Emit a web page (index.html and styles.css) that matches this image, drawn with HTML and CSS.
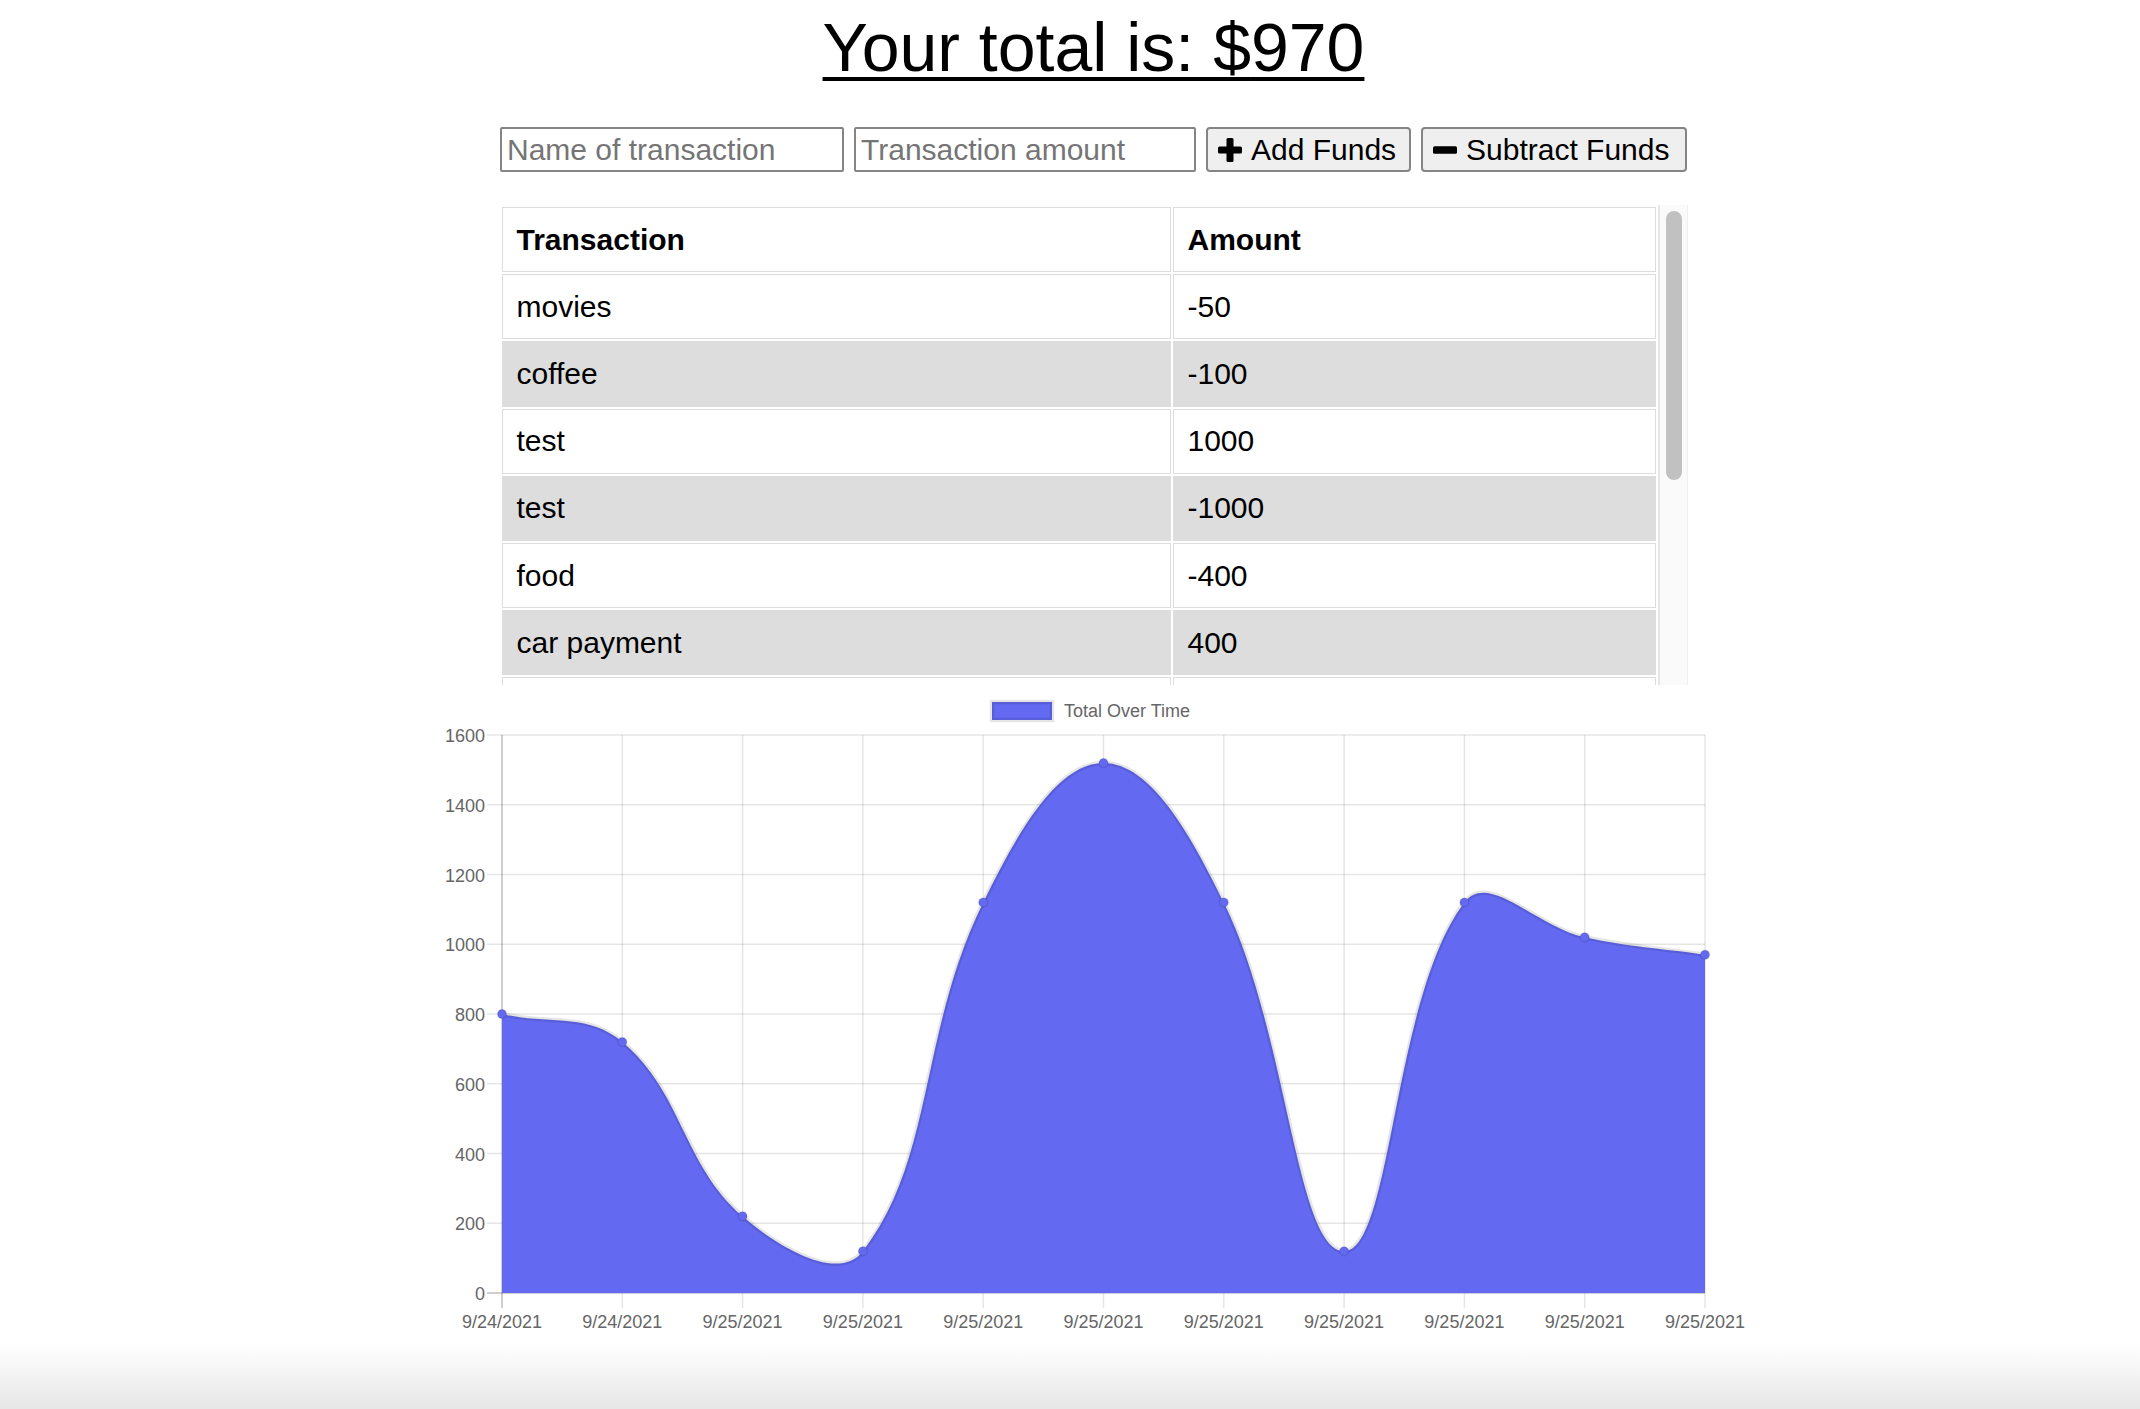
FILE: index.html
```html
<!DOCTYPE html>
<html lang="en">
<head>
<meta charset="utf-8">
<title>Budget Tracker</title>
<link rel="stylesheet" href="styles.css">
</head>
<body>
<h1 class="total">Your total is: $<span id="total">970</span></h1>

<form class="entry">
  <input class="field field-name" type="text" placeholder="Name of transaction">
  <input class="field field-amount" type="text" placeholder="Transaction amount">
  <button type="button" class="btn btn-add">
    <svg class="icon" viewBox="0 0 24 24" aria-hidden="true"><rect x="8.5" y="0" width="7" height="24" rx="1.5"/><rect x="0" y="8.5" width="24" height="7" rx="1.5"/></svg>
    <span>Add Funds</span>
  </button>
  <button type="button" class="btn btn-sub">
    <svg class="icon" viewBox="0 0 24 24" aria-hidden="true"><rect x="0" y="8.3" width="24" height="7.5" rx="1.5"/></svg>
    <span>Subtract Funds</span>
  </button>
</form>

<div class="table-box">
  <div class="table-view">
    <table class="tx">
      <thead>
        <tr><th class="col-name">Transaction</th><th>Amount</th></tr>
      </thead>
      <tbody>
        <tr><td>movies</td><td>-50</td></tr>
        <tr><td>coffee</td><td>-100</td></tr>
        <tr><td>test</td><td>1000</td></tr>
        <tr><td>test</td><td>-1000</td></tr>
        <tr><td>food</td><td>-400</td></tr>
        <tr><td>car payment</td><td>400</td></tr>
        <tr class="row-more"><td></td><td></td></tr>
      </tbody>
    </table>
  </div>
  <div class="scrollbar" aria-hidden="true"><div class="thumb"></div></div>
</div>

<svg class="chart" width="1321" height="650" viewBox="433 690 1321 650">
  <g class="legend">
    <rect class="legend-box" x="992" y="702" width="60" height="18"/>
    <text class="axis-label" x="1064" y="717">Total Over Time</text>
  </g>
  <g class="grid">
    <line x1="487" y1="735" x2="1705" y2="735"/>
    <line x1="487" y1="804.75" x2="1705" y2="804.75"/>
    <line x1="487" y1="874.5" x2="1705" y2="874.5"/>
    <line x1="487" y1="944.25" x2="1705" y2="944.25"/>
    <line x1="487" y1="1014" x2="1705" y2="1014"/>
    <line x1="487" y1="1083.75" x2="1705" y2="1083.75"/>
    <line x1="487" y1="1153.5" x2="1705" y2="1153.5"/>
    <line x1="487" y1="1223.25" x2="1705" y2="1223.25"/>
    <line x1="622.3" y1="735" x2="622.3" y2="1308"/>
    <line x1="742.6" y1="735" x2="742.6" y2="1308"/>
    <line x1="862.9" y1="735" x2="862.9" y2="1308"/>
    <line x1="983.2" y1="735" x2="983.2" y2="1308"/>
    <line x1="1103.5" y1="735" x2="1103.5" y2="1308"/>
    <line x1="1223.8" y1="735" x2="1223.8" y2="1308"/>
    <line x1="1344.1" y1="735" x2="1344.1" y2="1308"/>
    <line x1="1464.4" y1="735" x2="1464.4" y2="1308"/>
    <line x1="1584.7" y1="735" x2="1584.7" y2="1308"/>
    <line x1="1705" y1="735" x2="1705" y2="1308"/>
  </g>
  <g class="zero">
    <line x1="487" y1="1293" x2="1705" y2="1293"/>
    <line x1="502" y1="735" x2="502" y2="1308"/>
  </g>
  <g class="axis-label y-labels">
    <text x="485" y="742">1600</text>
    <text x="485" y="811.75">1400</text>
    <text x="485" y="881.5">1200</text>
    <text x="485" y="951.25">1000</text>
    <text x="485" y="1021">800</text>
    <text x="485" y="1090.75">600</text>
    <text x="485" y="1160.5">400</text>
    <text x="485" y="1230.25">200</text>
    <text x="485" y="1300">0</text>
  </g>
  <g class="axis-label x-labels">
    <text x="502" y="1328">9/24/2021</text>
    <text x="622.3" y="1328">9/24/2021</text>
    <text x="742.6" y="1328">9/25/2021</text>
    <text x="862.9" y="1328">9/25/2021</text>
    <text x="983.2" y="1328">9/25/2021</text>
    <text x="1103.5" y="1328">9/25/2021</text>
    <text x="1223.8" y="1328">9/25/2021</text>
    <text x="1344.1" y="1328">9/25/2021</text>
    <text x="1464.4" y="1328">9/25/2021</text>
    <text x="1584.7" y="1328">9/25/2021</text>
    <text x="1705" y="1328">9/25/2021</text>
  </g>
  <path id="area" class="area" d=""/>
  <path id="line" class="line" d=""/>
  <g id="points" class="points"></g>
</svg>

<script src="chart.js"></script>
</body>
</html>
```

FILE: styles.css
```css
html {
  background-color: #fff;
  background-image: linear-gradient(to bottom, #fff 0, #fff 1342px, #f6f6f6 1368px, #e6e6e6 1409px);
  background-repeat: no-repeat;
  background-size: 100% 1409px;
}

body {
  margin: 0;
  padding-left: 47px;
  font-family: "Liberation Sans", Arial, Helvetica, sans-serif;
  color: #000;
}

.total {
  margin: 0;
  padding-top: 8px;
  text-align: center;
  font-size: 68px;
  line-height: 78px;
  font-weight: normal;
  text-decoration: underline;
  text-decoration-thickness: 3.5px;
  text-underline-offset: 6px;
}

.entry {
  display: flex;
  justify-content: center;
  gap: 10px;
  margin: 41px 0 0;
}

.field {
  box-sizing: border-box;
  height: 45px;
  margin: 0;
  padding: 0 5px;
  border: 2px solid #858585;
  border-radius: 2px;
  font-family: "Liberation Sans", Arial, sans-serif;
  font-size: 30px;
  color: #000;
  background: #fff;
}

.field::placeholder {
  color: #757575;
}

.field-name {
  width: 344px;
}

.field-amount {
  width: 342px;
}

.btn {
  box-sizing: border-box;
  display: inline-flex;
  align-items: center;
  gap: 9px;
  height: 45px;
  margin: 0;
  padding: 0 0 0 10px;
  border: 2px solid #858585;
  border-radius: 4px;
  background: #efefef;
  color: #000;
  font-family: "Liberation Sans", Arial, sans-serif;
  font-size: 30px;
  white-space: nowrap;
}

.btn-add {
  width: 205px;
}

.btn-sub {
  width: 266px;
}

.icon {
  width: 24px;
  height: 24px;
  flex: none;
  fill: #000;
}

.table-box {
  display: flex;
  width: 1188px;
  height: 480px;
  margin: 33px auto 0;
}

.table-view {
  flex: 1;
  min-width: 0;
  overflow: hidden;
}

.scrollbar {
  box-sizing: border-box;
  flex: none;
  width: 30px;
  padding: 6px 5px 0 6px;
  background: #fafafa;
  border-left: 2px solid #e6e6e6;
  border-right: 1px solid #efefef;
}

.thumb {
  width: 16px;
  height: 269px;
  border-radius: 8px;
  background: #c1c1c1;
}

.tx {
  width: 100%;
  border-spacing: 2px;
  font-size: 30px;
}

.tx th,
.tx td {
  padding: 14.6px 14px;
  border: 1px solid #ddd;
  line-height: 34px;
  text-align: left;
  background: #fff;
}

.tx th {
  font-weight: bold;
}

.tx .col-name {
  width: 639px;
}

.tx tbody tr:nth-child(even) td {
  background: #ddd;
}

.tx .row-more td {
  height: 34px;
}

.chart {
  display: block;
  margin: 5px auto 0;
}

.axis-label {
  font-family: "Liberation Sans", Arial, Helvetica, sans-serif;
  font-size: 18px;
  fill: #666;
}

.y-labels {
  text-anchor: end;
}

.x-labels {
  text-anchor: middle;
}

.legend-box {
  fill: #6369f1;
  stroke: rgba(0, 0, 0, 0.1);
  stroke-width: 4.5;
}

.grid line {
  stroke: rgba(0, 0, 0, 0.1);
  stroke-width: 1.5;
}

.zero line {
  stroke: rgba(0, 0, 0, 0.25);
  stroke-width: 1.5;
}

.area {
  fill: #6369f1;
  stroke: none;
}

.line {
  fill: none;
  stroke: rgba(0, 0, 0, 0.1);
  stroke-width: 4.5;
}

.points circle {
  fill: #6369f1;
  stroke: rgba(0, 0, 0, 0.1);
  stroke-width: 1.5;
}
```

FILE: chart.js
```js
(function () {
  var vals = [800, 720, 220, 120, 1120, 1520, 1120, 120, 1120, 1020, 970];
  var left = 502, right = 1705, top = 735, bottom = 1293;
  var step = (right - left) / (vals.length - 1);
  var scale = (bottom - top) / 1600;
  var pts = vals.map(function (v, i) {
    return { x: left + step * i, y: bottom - v * scale };
  });
  var t = 0.4;
  function cx(v) { return Math.min(Math.max(v, left), right); }
  function cy(v) { return Math.min(Math.max(v, top), bottom); }
  var cps = pts.map(function (cur, i) {
    var prev = i > 0 ? pts[i - 1] : cur;
    var next = i < pts.length - 1 ? pts[i + 1] : cur;
    var d01 = Math.sqrt(Math.pow(cur.x - prev.x, 2) + Math.pow(cur.y - prev.y, 2));
    var d12 = Math.sqrt(Math.pow(next.x - cur.x, 2) + Math.pow(next.y - cur.y, 2));
    var s01 = d01 / (d01 + d12);
    var s12 = d12 / (d01 + d12);
    if (isNaN(s01)) { s01 = 0; }
    if (isNaN(s12)) { s12 = 0; }
    var fa = t * s01, fb = t * s12;
    return {
      px: cx(cur.x - fa * (next.x - prev.x)),
      py: cy(cur.y - fa * (next.y - prev.y)),
      nx: cx(cur.x + fb * (next.x - prev.x)),
      ny: cy(cur.y + fb * (next.y - prev.y))
    };
  });
  var d = 'M' + pts[0].x.toFixed(2) + ' ' + pts[0].y.toFixed(2);
  for (var i = 1; i < pts.length; i++) {
    d += ' C' + cps[i - 1].nx.toFixed(2) + ' ' + cps[i - 1].ny.toFixed(2) + ' ' +
      cps[i].px.toFixed(2) + ' ' + cps[i].py.toFixed(2) + ' ' +
      pts[i].x.toFixed(2) + ' ' + pts[i].y.toFixed(2);
  }
  document.getElementById('line').setAttribute('d', d);
  document.getElementById('area').setAttribute('d', d + ' L' + right + ' ' + bottom + ' L' + left + ' ' + bottom + ' Z');
  var g = document.getElementById('points');
  pts.forEach(function (p) {
    var c = document.createElementNS('http://www.w3.org/2000/svg', 'circle');
    c.setAttribute('cx', p.x.toFixed(2));
    c.setAttribute('cy', p.y.toFixed(2));
    c.setAttribute('r', '4.5');
    g.appendChild(c);
  });
})();
```
